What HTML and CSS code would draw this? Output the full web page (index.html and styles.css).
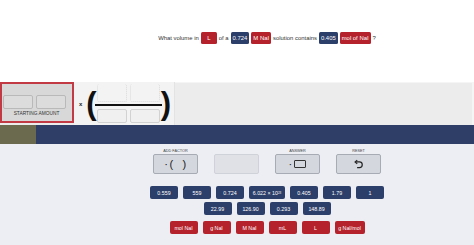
FILE: index.html
```html
<!DOCTYPE html>
<html>
<head>
<meta charset="utf-8">
<link rel="stylesheet" href="styles.css">
</head>
<body>
<div class="top">
  <div class="question">
    <span>What volume in</span>
    <span class="chip red wide">L</span>
    <span>of a</span>
    <span class="chip navy">0.724</span>
    <span class="chip red">M NaI</span>
    <span>solution contains</span>
    <span class="chip navy">0.405</span>
    <span class="chip red">mol of NaI</span>
    <span>?</span>
  </div>
</div>
<div class="workspace">
  <div class="start">
    <div class="start-boxes"><div class="slot"></div><div class="slot"></div></div>
    <div class="start-label">STARTING AMOUNT</div>
  </div>
  <div class="factor">
    <span class="times">x</span>
    <span class="paren">(</span>
    <div class="fraction">
      <div class="frow"><div class="fslot ghost"></div><div class="fslot ghost"></div></div>
      <div class="fline"></div>
      <div class="frow"><div class="fslot"></div><div class="fslot"></div></div>
    </div>
    <span class="paren">)</span>
  </div>
  <div class="rest"></div>
</div>
<div class="band"><div class="olive"></div><div class="navyband"></div></div>
<div class="controls">
  <div class="tools">
    <div class="tool"><div class="tlabel">ADD FACTOR</div><div class="tbtn"><span class="dot">·</span><span class="tparen">(&nbsp;&nbsp;&nbsp;)</span></div></div>
    <div class="tool"><div class="tlabel">&nbsp;</div><div class="tbtn empty"></div></div>
    <div class="tool"><div class="tlabel">ANSWER</div><div class="tbtn"><span class="dot">·</span><span class="ansbox"></span></div></div>
    <div class="tool"><div class="tlabel">RESET</div><div class="tbtn"><svg width="11" height="11" viewBox="0 0 12 12"><path d="M3.5 3.2 H7 A3 3 0 0 1 7 9.4 H4.5" fill="none" stroke="#222" stroke-width="1.3"/><path d="M4.6 1.3 L2.3 3.2 L4.6 5.1" fill="none" stroke="#222" stroke-width="1.3"/></svg></div></div>
  </div>
  <div class="row r1">
    <span class="num">0.559</span><span class="num">559</span><span class="num">0.724</span><span class="num big">6.022 × 10<sup>23</sup></span><span class="num">0.405</span><span class="num">1.79</span><span class="num">1</span>
  </div>
  <div class="row r2">
    <span class="num">22.99</span><span class="num">126.90</span><span class="num">0.293</span><span class="num">148.89</span>
  </div>
  <div class="row r3">
    <span class="unit">mol NaI</span><span class="unit">g NaI</span><span class="unit">M NaI</span><span class="unit">mL</span><span class="unit">L</span><span class="unit wide">g NaI/mol</span>
  </div>
</div>
</body>
</html>
```
FILE: styles.css
```css
html, body {
  margin: 0;
  padding: 0;
}
body {
  width: 474px;
  height: 245px;
  overflow: hidden;
  font-family: "Liberation Sans", Arial, sans-serif;
  background: #eceef3;
}
.top {
  height: 82px;
  background: #ffffff;
  box-sizing: border-box;
  padding: 32px 0 0 60px;
}
.question {
  display: flex;
  justify-content: center;
  align-items: center;
  gap: 2px;
  height: 12px;
  font-size: 5.9px;
  color: #333;
}
.chip {
  display: inline-flex;
  align-items: center;
  justify-content: center;
  height: 12px;
  padding: 0 2px;
  border-radius: 1.5px;
  color: #fff;
}
.chip.wide {
  width: 16px;
  padding: 0;
}
.red { background: #b5222b; }
.navy { background: #2c3e6a; }

.workspace {
  height: 43px;
  display: flex;
  background: #ececec;
}
.start {
  width: 74px;
  height: 41px;
  box-sizing: border-box;
  border: 2px solid #c23a44;
  background: #d8d8d8;
  padding: 11px 0 0 1px;
}
.start-boxes {
  display: flex;
  gap: 3px;
}
.slot {
  width: 30px;
  height: 14px;
  box-sizing: border-box;
  border: 1px solid #b9b9b9;
  border-radius: 2px;
  background: #dcdcdc;
}
.start-label {
  margin-top: 2px;
  width: 67px;
  text-align: center;
  font-size: 4.8px;
  color: #333;
}
.factor {
  width: 100px;
  height: 43px;
  display: flex;
  align-items: center;
  background: #f3f3f3;
  border-right: 1px solid #e3e3e3;
}
.times {
  font-size: 6px;
  font-weight: bold;
  margin: 0 0 0 5px;
  color: #222;
}
.paren {
  font-size: 31px;
  font-weight: bold;
  line-height: 30px;
  color: #111;
  margin: 0 0 0 4px;
}
.factor .paren + .fraction { margin-left: -2px; }
.fraction {
  display: flex;
  flex-direction: column;
  width: 67px;
  align-items: center;
}
.frow {
  display: flex;
  gap: 3px;
}
.fslot {
  width: 30px;
  height: 14px;
  box-sizing: border-box;
  border: 1px solid #d2d2d2;
  border-radius: 2px;
  background: #f0f0f0;
}
.fslot.ghost {
  height: 18px;
  border: 1px dotted #dadada;
  border-top: none;
  background: transparent;
}
.fline {
  width: 67px;
  height: 2px;
  background: #111;
  margin: 2px 0 3px;
}
.fraction + .paren { margin-left: -1px; }
.rest {
  flex: 1;
  border-top: 1px solid #f5f5f5;
  border-right: 2px solid #f5f5f5;
}

.band {
  height: 19px;
  display: flex;
}
.olive {
  width: 36px;
  background: #6b6a4e;
}
.navyband {
  flex: 1;
  background: #2e3e66;
}

.controls {
  padding: 5px 0 0 60px;
}
.tools {
  display: flex;
  justify-content: center;
  gap: 16px;
}
.tool {
  display: flex;
  flex-direction: column;
  align-items: center;
}
.tlabel {
  font-size: 3.8px;
  height: 5px;
  color: #444;
}
.tbtn {
  width: 45px;
  height: 20px;
  box-sizing: border-box;
  border: 1px solid #a7abb3;
  border-radius: 2px;
  background: #d4d7dd;
  display: flex;
  align-items: center;
  justify-content: center;
  gap: 2px;
  color: #222;
}
.tbtn.empty {
  background: #dfe1e6;
  border-color: #cfd2d8;
}
.dot {
  font-size: 8px;
  font-weight: bold;
}
.tparen {
  font-size: 11px;
}
.ansbox {
  width: 10px;
  height: 6px;
  border: 1px solid #333;
  border-radius: 1px;
}
.row {
  display: flex;
  justify-content: center;
  gap: 5px;
}
.r1 { margin-top: 12px; }
.r2 { margin-top: 3px; }
.r3 { margin-top: 6px; }
.num, .unit {
  width: 28px;
  height: 13px;
  border-radius: 2px;
  color: #fff;
  font-size: 5.3px;
  display: flex;
  align-items: center;
  justify-content: center;
}
.num { background: #2c3e6a; }
.num.big { width: 36px; }
.num sup { font-size: 3px; vertical-align: 2px; }
.unit { background: #b5222b; }
.unit.wide { width: 30px; }
```
